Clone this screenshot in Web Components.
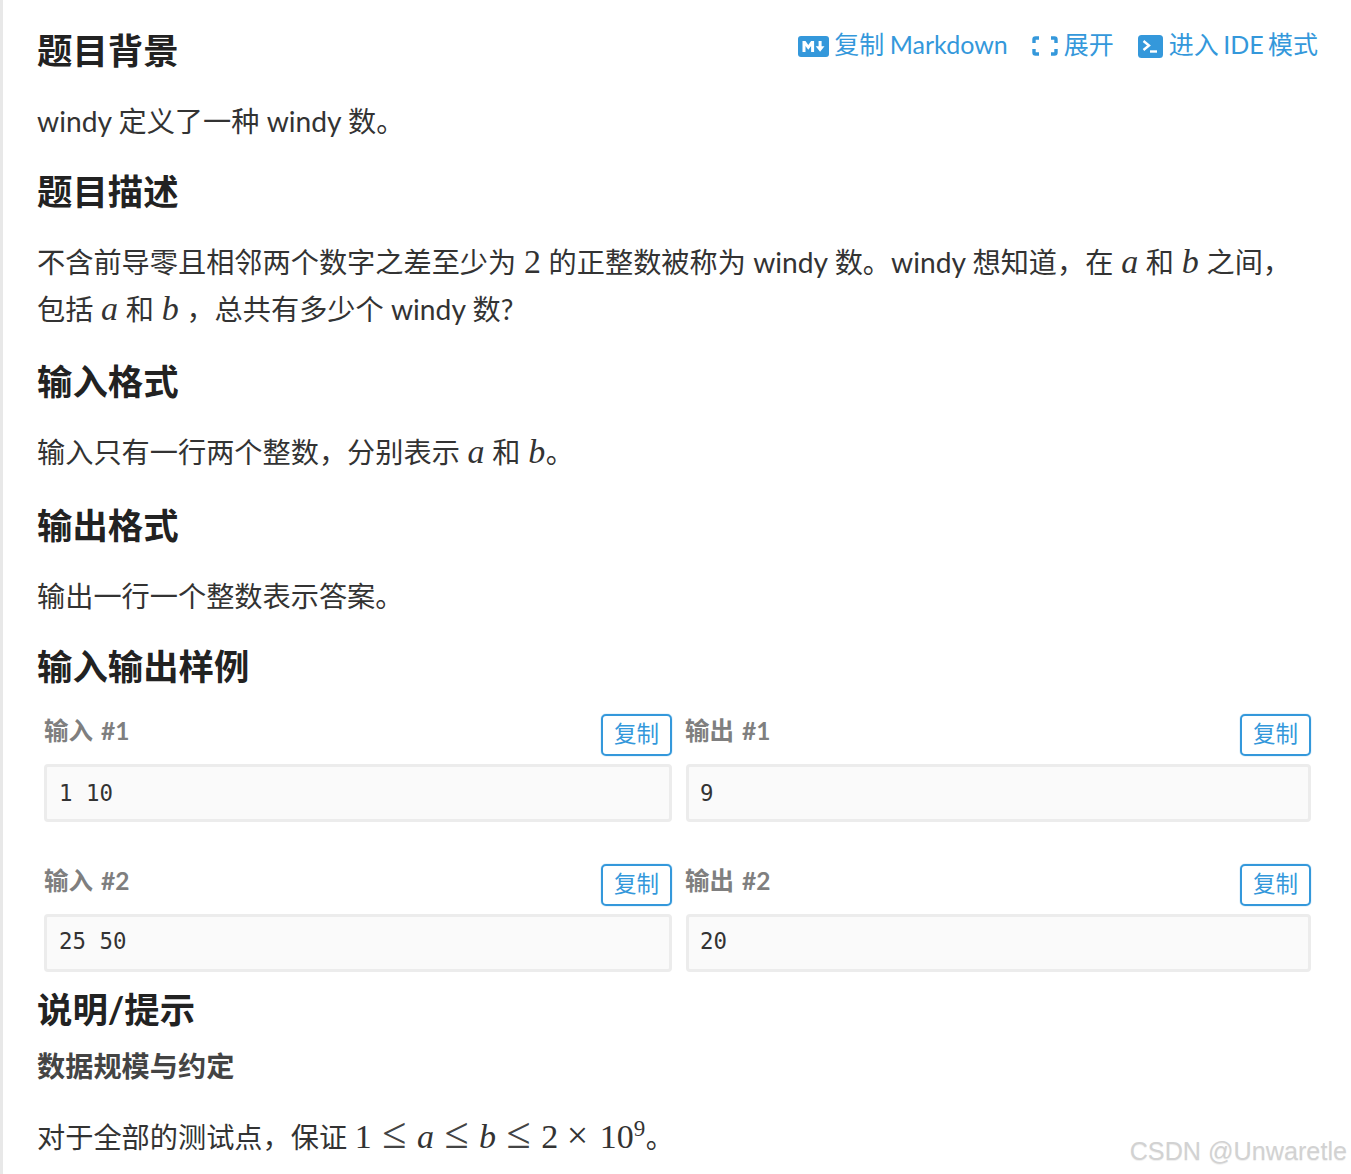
<!doctype html>
<html lang="zh-CN">
<head>
<meta charset="utf-8">
<title>题目</title>
<style>
  html, body { margin: 0; background: #fff; }
  body {
    font-family: Lato, "Noto Sans CJK SC", sans-serif;
    color: #333;
  }
</style>
</head>
<body>
<x-page>
  <x-heading first>
    题目背景
    <x-tool slot="tools" icon="md" style="--gap:5px;word-spacing:-1px">复制 Markdown</x-tool>
    <x-tool slot="tools" icon="expand">展开</x-tool>
    <x-tool slot="tools" icon="ide" style="word-spacing:-2px">进入 IDE 模式</x-tool>
  </x-heading>
  <x-para>windy 定义了一种 windy 数。</x-para>

  <x-heading>题目描述</x-heading>
  <x-para style="--after:2px">不含前导零且相邻两个数字之差至少为 <x-math n>2</x-math> 的正整数被称为 windy 数。windy 想知道，在 <x-math>a</x-math> 和 <x-math>b</x-math> 之间，<br>包括 <x-math>a</x-math> 和 <x-math>b</x-math> ，总共有多少个 windy 数?</x-para>

  <x-heading>输入格式</x-heading>
  <x-para style="--after:3px">输入只有一行两个整数，分别表示 <x-math>a</x-math> 和 <x-math>b</x-math>。</x-para>

  <x-heading>输出格式</x-heading>
  <x-para>输出一行一个整数表示答案。</x-para>

  <x-heading>输入输出样例</x-heading>
  <x-samples>
    <x-sample label="输入 #1">1 10</x-sample>
    <x-sample label="输出 #1">9</x-sample>
    <x-sample label="输入 #2" style="--code-lh:49px">25 50</x-sample>
    <x-sample label="输出 #2" style="--code-lh:49px">20</x-sample>
  </x-samples>

  <x-heading tight>说明/提示</x-heading>
  <x-subheading>数据规模与约定</x-subheading>
  <x-para style="--before:26px">对于全部的测试点，保证 <x-math n>1</x-math><x-math rel>≤</x-math><x-math>a</x-math><x-math rel>≤</x-math><x-math>b</x-math><x-math rel>≤</x-math><x-math n>2</x-math><x-math times>×</x-math><x-math n>10<sup>9</sup></x-math>。</x-para>
</x-page>
<x-watermark>CSDN @Unwaretle</x-watermark>

<script>
const icons = {
  md: `<svg width="31" height="21" viewBox="0 0 31 21"><rect width="31" height="21" rx="3" fill="#3498db"/><path d="M4.500 16V5h3l2.800 4 2.800-4h3v11h-3v-6l-2.800 3.700L7.500 10v6z" fill="#fff"/><path d="M20.600 5h3v5.300h2.900l-4.400 5.400-4.400-5.400h2.900z" fill="#fff"/></svg>`,
  expand: `<svg width="26" height="20" viewBox="0 0 26 20"><path d="M7 2H3.500Q2 2 2 3.500V7M19 2h3.500Q24 2 24 3.500V7M7 18H3.500Q2 18 2 16.500V13M19 18h3.500q1.500 0 1.500-1.500V13" fill="none" stroke="#3498db" stroke-width="3.4"/></svg>`,
  ide: `<svg width="25" height="23" viewBox="0 0 25 23"><rect width="25" height="23" rx="3.500" fill="#3498db"/><path d="M5.500 6l5.500 4.500-5.500 4.500" fill="none" stroke="#fff" stroke-width="2.400"/><path d="M12 16.500h7" stroke="#fff" stroke-width="2.400"/></svg>`,
};

class XPage extends HTMLElement {
  constructor() {
    super();
    this.attachShadow({ mode: "open" }).innerHTML = `
      <style>
      :host { display: block; box-sizing: border-box; min-height: 1174px; padding: 26px 33px 0 34px; border-left: 3px solid #e8e8e8; }
      </style>
      <slot></slot>`;
  }
}

class XHeading extends HTMLElement {
  constructor() {
    super();
    this.attachShadow({ mode: "open" }).innerHTML = `
      <style>
      :host { display: flex; justify-content: space-between; align-items: flex-start; margin-top: 22px; font: 700 35.4px/50px Lato, "Noto Sans CJK SC", sans-serif; color: #222; }
      :host([first]) { margin-top: 0; }
      :host([tight]) { margin-top: 13px; }
      .tools { display: flex; gap: 24px; }
      </style>
      <div><slot></slot></div>
      <div class="tools"><slot name="tools"></slot></div>`;
  }
}

class XTool extends HTMLElement {
  constructor() {
    super();
    const s = this.attachShadow({ mode: "open" });
    s.innerHTML = `
      <style>
      :host { display: flex; align-items: center; gap: var(--gap, 6px); height: 40px; font: 400 25px/36px Lato, "Noto Sans CJK SC", sans-serif; color: #3498db; }
      svg { display: block; }
      .t { display: block; padding-bottom: 4px; }
      </style>
      ${icons[this.getAttribute("icon")]}<span class="t"><slot></slot></span>`;
  }
}

class XPara extends HTMLElement {
  constructor() {
    super();
    this.attachShadow({ mode: "open" }).innerHTML = `
      <style>
      :host { display: block; margin-top: var(--before, 22px); padding-bottom: var(--after, 0); font-size: 28.2px; line-height: 47px; color: #333; }
      </style>
      <slot></slot>`;
  }
}

class XMath extends HTMLElement {
  constructor() {
    super();
    // no whitespace before the slot: this host is inline and it would render
    this.attachShadow({ mode: "open" }).innerHTML = `<style>
      :host { display: inline; margin: 0 .5px; font-family: "Liberation Serif", "DejaVu Serif", serif; font-style: italic; font-size: 34px; line-height: 0; }
      :host([n]) { font-style: normal; }
      :host([rel]) { font-style: normal; font-size: 44px; margin: 0 10px; color: #444; }
      :host([times]) { font-style: normal; font-size: 38px; margin: 0 11px 0 8px; }
      ::slotted(sup) { font-size: 23px; line-height: 0; }
      </style><slot></slot>`;
  }
}

class XSubheading extends HTMLElement {
  constructor() {
    super();
    this.attachShadow({ mode: "open" }).innerHTML = `
      <style>
      :host { display: block; margin-top: 9px; font-size: 28.2px; font-weight: 700; line-height: 44px; color: #444; }
      </style>
      <slot></slot>`;
  }
}

class XSamples extends HTMLElement {
  constructor() {
    super();
    this.attachShadow({ mode: "open" }).innerHTML = `
      <style>
      :host { display: grid; grid-template-columns: 628px 625px; column-gap: 14px; row-gap: 42px; margin: 22px 0 0 7px; }
      </style>
      <slot></slot>`;
  }
}

class XCopy extends HTMLElement {
  constructor() {
    super();
    this.attachShadow({ mode: "open" }).innerHTML = `
      <style>
      :host { display: block; box-sizing: border-box; width: 71px; height: 42px; border: 2px solid #3498db; border-radius: 5px; box-shadow: 0 0 1px #3498db; text-align: center; font-size: 22.5px; line-height: 35px; color: #3498db; }
      </style>
      <slot></slot>`;
  }
}

class XSample extends HTMLElement {
  constructor() {
    super();
    const s = this.attachShadow({ mode: "open" });
    s.innerHTML = `
      <style>
      :host { display: block; }
      :host(:nth-child(even)) .label { margin-left: -1px; }
      :host(:nth-child(even)) .box { padding: 0 11px; }
      .top { display: flex; justify-content: space-between; align-items: flex-start; height: 50px; }
      .label { font-size: 24.5px; font-weight: 700; line-height: 34px; word-spacing: 2px; color: #7f7f7f; }
      .box { box-sizing: border-box; height: 58px; padding: 0 12px; border: 3px solid #ececec; border-radius: 4px; background: #fafafa; font: 22.4px/var(--code-lh, 52px) "DejaVu Sans Mono", monospace; color: #333; white-space: pre; }
      </style>
      <div class="top"><span class="label"></span><x-copy>复制</x-copy></div>
      <div class="box"><slot></slot></div>`;
    s.querySelector(".label").textContent = this.getAttribute("label");
  }
}

class XWatermark extends HTMLElement {
  constructor() {
    super();
    this.attachShadow({ mode: "open" }).innerHTML = `
      <style>
      :host { position: absolute; right: 4px; top: 1135px; font: 25.2px/32px "Liberation Sans", sans-serif; color: #d2d2d2; text-shadow: 0 1px 1px #eee; }
      </style>
      <slot></slot>`;
  }
}

customElements.define("x-page", XPage);
customElements.define("x-heading", XHeading);
customElements.define("x-tool", XTool);
customElements.define("x-para", XPara);
customElements.define("x-math", XMath);
customElements.define("x-subheading", XSubheading);
customElements.define("x-samples", XSamples);
customElements.define("x-copy", XCopy);
customElements.define("x-sample", XSample);
customElements.define("x-watermark", XWatermark);
</script>
</body>
</html>
